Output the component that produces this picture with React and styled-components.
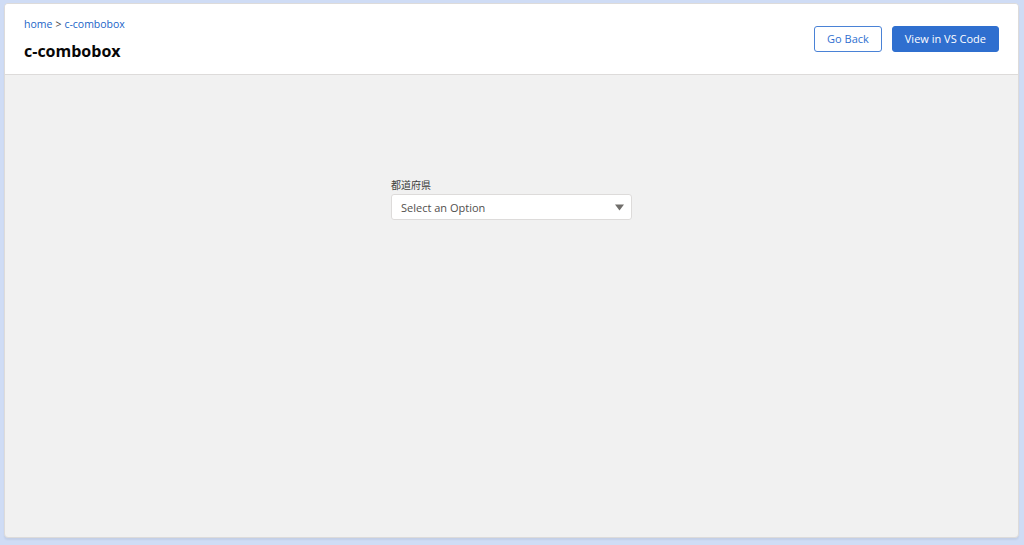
import React from 'react'
import styled, { createGlobalStyle } from 'styled-components';

const GlobalStyle = createGlobalStyle`
  html, body {
    margin: 0;
    padding: 0;
    background: #cfdcf5;
    font-family: "Open Sans", "Noto Sans CJK JP", sans-serif;
  }
`;

const App = () => {
  return (
    <>
      <GlobalStyle />
      <Page>
        <Frame>
          <Header>
            <TitleBlock>
              <Breadcrumb>
                <Crumb>home</Crumb>
                <Sep>&gt;</Sep>
                <Crumb>c-combobox</Crumb>
              </Breadcrumb>
              <Title>c-combobox</Title>
            </TitleBlock>
            <Actions>
              <Button>Go Back</Button>
              <Button $brand>View in VS Code</Button>
            </Actions>
          </Header>
          <Body>
            <Field>
              <Label>都道府県</Label>
              <Select>
                <Placeholder>Select an Option</Placeholder>
                <svg width="9" height="7" viewBox="0 0 9 7">
                  <path d="M0 0.5 L9 0.5 L4.5 6.5 Z" fill="#706e6b" />
                </svg>
              </Select>
            </Field>
          </Body>
        </Frame>
      </Page>
    </>
  )
}

export default App

const Page = styled.div`
  height: 545px;
  box-sizing: border-box;
  padding: 3px 5px 7px 4px;
`;

const Frame = styled.div`
  height: 100%;
  display: flex;
  flex-direction: column;
  background: #f1f1f1;
  border: 1px solid #dddbda;
  border-radius: 4px;
  overflow: hidden;
  box-sizing: border-box;
  box-shadow: 0 2px 2px rgba(0, 0, 0, 0.06);
`;

const Header = styled.div`
  height: 71px;
  box-sizing: border-box;
  background: #ffffff;
  border-bottom: 1px solid #dddbda;
  display: flex;
  align-items: center;
  justify-content: space-between;
  padding: 0 19px 0 19px;
`;

const TitleBlock = styled.div`
  display: flex;
  flex-direction: column;
  gap: 10px;
  margin-top: 0px;
`;

const Breadcrumb = styled.div`
  display: flex;
  align-items: center;
  gap: 3px;
  font-size: 10.5px;
  line-height: 14px;
`;

const Crumb = styled.span`
  color: #1b65c8;
`;

const Sep = styled.span`
  color: #3e3e3c;
`;

const Title = styled.h1`
  margin: 0;
  font-size: 16px;
  line-height: 20px;
  font-weight: 700;
  color: #080707;
`;

const Actions = styled.div`
  display: flex;
  gap: 10px;
  margin-top: -1px;
`;

const Button = styled.button`
  height: 26px;
  padding: 0 12px;
  font-family: inherit;
  font-size: 11px;
  border-radius: 3px;
  border: 1px solid ${p => (p.$brand ? '#2f6fcf' : '#4a82d6')};
  background: ${p => (p.$brand ? '#2f6fcf' : '#ffffff')};
  color: ${p => (p.$brand ? '#ffffff' : '#2f6fcf')};
  cursor: pointer;
`;

const Body = styled.div`
  flex: 1;
  display: flex;
  justify-content: center;
  padding-top: 104px;
`;

const Field = styled.div`
  width: 241px;
  display: flex;
  flex-direction: column;
  gap: 2px;
`;

const Label = styled.label`
  font-size: 10px;
  line-height: 13px;
  color: #3e3e3c;
`;

const Select = styled.div`
  height: 26px;
  box-sizing: border-box;
  background: #ffffff;
  border: 1px solid #dddbda;
  border-radius: 3px;
  display: flex;
  align-items: center;
  justify-content: space-between;
  padding: 0 7px 0 9px;
`;

const Placeholder = styled.span`
  font-size: 11px;
  color: #514f4d;
`;
